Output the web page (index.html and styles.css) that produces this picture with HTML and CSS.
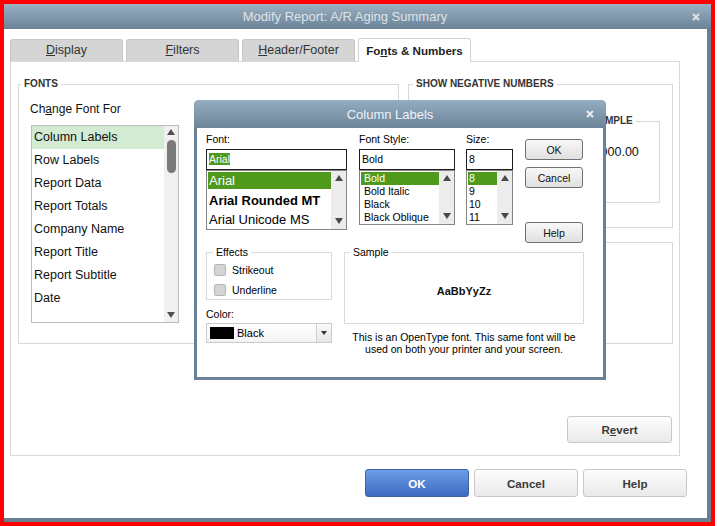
FILE: index.html
```html
<!DOCTYPE html>
<html lang="en">
<head>
	<meta charset="UTF-8">
	<title>Modify Report: A/R Aging Summary</title>
	<link rel="stylesheet" href="styles.css">
</head>
<body>
<div class="screen">
	<div class="frame">
		<div class="titlebar">
			<span class="title">Modify Report: A/R Aging Summary</span>
			<span class="close"><svg width="8" height="8" viewBox="0 0 8 8"><path d="M1 1L7 7M7 1L1 7" stroke="#dde3e8" stroke-width="2.2"/></svg></span>
		</div>
		<div class="win-body">
			<div class="tabs">
				<div class="tab"><u>D</u>isplay</div>
				<div class="tab"><u>F</u>ilters</div>
				<div class="tab"><u>H</u>eader/Footer</div>
				<div class="tab active">Fo<u>n</u>ts &amp; Numbers</div>
			</div>
			<div class="panel">
				<div class="panel-row">
					<fieldset class="group fonts-box">
						<legend>FONTS</legend>
						<div class="fonts-in">
							<div class="change-label">Ch<u>a</u>nge Font For</div>
							<div class="listbox">
								<ul class="items">
									<li class="sel">Column Labels</li>
									<li>Row Labels</li>
									<li>Report Data</li>
									<li>Report Totals</li>
									<li>Company Name</li>
									<li>Report Title</li>
									<li>Report Subtitle</li>
									<li>Date</li>
								</ul>
								<div class="vscroll">
									<span class="arr up"></span>
									<span class="thumb"></span>
									<span class="arr down"></span>
								</div>
							</div>
						</div>
					</fieldset>
					<div class="right-col">
						<fieldset class="group neg-box">
							<legend>SHOW NEGATIVE NUMBERS</legend>
							<div class="neg-in">
								<fieldset class="group sample-box">
									<legend>SAMPLE</legend>
									<div class="sample-num">-1,000.00</div>
								</fieldset>
							</div>
						</fieldset>
						<fieldset class="group all-box">
							<legend>SHOW ALL NUMBERS</legend>
						</fieldset>
					</div>
				</div>
				<div class="revert-row"><button class="btn">R<u>e</u>vert</button></div>
			</div>
			<div class="footer">
				<button class="btn primary">OK</button>
				<button class="btn">Cancel</button>
				<button class="btn">Help</button>
			</div>
		</div>
	</div>

	<!-- font picker dialog on top of the tab -->
	<div class="fdlg">
		<div class="fdlg-title">
			<span class="t">Column Labels</span>
			<span class="x"><svg width="8" height="8" viewBox="0 0 8 8"><path d="M1 1L7 7M7 1L1 7" stroke="#e2e8ec" stroke-width="2.2"/></svg></span>
		</div>
		<div class="fdlg-body">
			<div class="fd-row1">
				<div class="fd-col c-font">
					<div class="fd-label">Font:</div>
					<div class="fd-input"><span class="hl">Arial</span></div>
					<div class="fd-list">
						<ul class="font-items">
							<li class="sel">Arial</li>
							<li class="b">Arial Rounded MT</li>
							<li>Arial Unicode MS</li>
						</ul>
						<div class="fd-scroll"><span class="arr up"></span><span class="arr down"></span></div>
					</div>
				</div>
				<div class="fd-col c-style">
					<div class="fd-label">Font Style:</div>
					<div class="fd-input">Bold</div>
					<div class="fd-list short">
						<ul class="small-items">
							<li class="sel">Bold</li>
							<li>Bold Italic</li>
							<li>Black</li>
							<li>Black Oblique</li>
						</ul>
						<div class="fd-scroll"><span class="arr up"></span><span class="arr down"></span></div>
					</div>
				</div>
				<div class="fd-col c-size">
					<div class="fd-label">Size:</div>
					<div class="fd-input">8</div>
					<div class="fd-list short">
						<ul class="small-items">
							<li class="sel">8</li>
							<li>9</li>
							<li>10</li>
							<li>11</li>
						</ul>
						<div class="fd-scroll"><span class="arr up"></span><span class="arr down"></span></div>
					</div>
				</div>
				<div class="fd-btns">
					<button class="fd-btn">OK</button>
					<button class="fd-btn cancel">Cancel</button>
					<button class="fd-btn help">Help</button>
				</div>
			</div>
			<div class="fd-row2">
				<div class="fd-left">
					<fieldset class="fd-group effects">
						<legend>Effects</legend>
						<div class="chk-row first"><span class="chk"></span><span>Strikeout</span></div>
						<div class="chk-row"><span class="chk"></span><span>Underline</span></div>
					</fieldset>
					<div class="color-label">Color:</div>
					<div class="color-sel">
						<span class="swatch"></span>
						<span>Black</span>
						<span class="drop"><span class="tri"></span></span>
					</div>
				</div>
				<div class="fd-right">
					<fieldset class="fd-group sample">
						<legend>Sample</legend>
						<div class="sample-text">AaBbYyZz</div>
					</fieldset>
					<div class="desc">This is an OpenType font. This same font will be<br>used on both your printer and your screen.</div>
				</div>
			</div>
		</div>
	</div>
</div>
</body>
</html>
```

FILE: styles.css
```css
*{
	box-sizing: border-box;
}
body{
	margin: 0;
	background: #fff;
	font-family: "Liberation Sans", Arial, sans-serif;
	color: #222;
}
.screen{
	position: relative;
	width: 717px;
	height: 526px;
}
.frame{
	width: 715px;
	height: 526px;
	border: 4px solid #ff0000;
	display: flex;
	flex-direction: column;
}
.titlebar{
	height: 25px;
	flex: none;
	display: flex;
	align-items: center;
	background: linear-gradient(#9ab0c3, #6b8397);
}
.titlebar .title{
	flex: 1;
	text-align: center;
	font-size: 13px;
	color: #dfe3e7;
}
.titlebar .close{
	width: 25px;
	display: flex;
	padding-left: 6px;
}
.win-body{
	flex: 1;
	background: #fff;
	border-right: 4px solid #6a7f92;
	border-bottom: 4px solid #6a7f92;
	padding-top: 8px;
}

/* tabs */
.tabs{
	display: flex;
	align-items: flex-end;
	gap: 3px;
	height: 24px;
	margin-left: 6px;
}
.tab{
	width: 113px;
	height: 22px;
	line-height: 21px;
	text-align: center;
	font-size: 12.5px;
	color: #333;
	background: #d5d5d5;
	border: 1px solid #c6c6c6;
	border-bottom: none;
	border-radius: 3px 3px 0 0;
}
.tab.active{
	position: relative;
	height: 24px;
	margin-bottom: -1px;
	line-height: 23px;
	background: #fff;
	border-color: #d3d3d3;
	font-weight: bold;
	font-size: 11.6px;
	color: #222;
}

/* panel */
.panel{
	width: 670px;
	height: 395px;
	margin-left: 6px;
	border: 1px solid #d9d9d9;
	padding: 16px 0 12px 7px;
	display: flex;
	flex-direction: column;
}
.panel-row{
	display: flex;
}
.group{
	margin: 0;
	padding: 0;
	min-width: 0;
	border: 1px solid #d8d8d8;
}
.group > legend{
	font-size: 10px;
	font-weight: bold;
	line-height: 12px;
	color: #333;
	padding: 0 3px;
	margin-left: 2px;
	white-space: nowrap;
}
.fonts-box{
	width: 381px;
	height: 266px;
}
.fonts-in{
	padding: 11px 0 0 11px;
}
.change-label{
	font-size: 12px;
	line-height: 16px;
	color: #111;
}
.listbox{
	display: flex;
	width: 148px;
	height: 198px;
	margin: 8px 0 0 1px;
	border: 1px solid #bdbdbd;
}
.items{
	flex: 1;
	margin: 0;
	padding: 0;
	list-style: none;
}
.items li{
	height: 23px;
	line-height: 23px;
	padding-left: 2px;
	font-size: 12.5px;
	color: #111;
}
.items li.sel{
	background: #d2ebd2;
}
.vscroll{
	width: 14px;
	background: #f0f0f0;
	display: flex;
	flex-direction: column;
	align-items: center;
	padding: 3px 0 4px;
}
.vscroll .thumb{
	width: 9px;
	height: 33px;
	margin-top: 5px;
	border-radius: 5px;
	background: #7a7a7a;
}
.vscroll .down{
	margin-top: auto;
}
.arr{
	display: block;
	width: 0;
	height: 0;
	border-left: 4.5px solid transparent;
	border-right: 4.5px solid transparent;
}
.arr.up{
	border-bottom: 6px solid #505050;
}
.arr.down{
	border-top: 6px solid #505050;
}
.right-col{
	width: 265px;
	margin-left: 9px;
}
.neg-box{
	height: 150px;
}
.neg-box > legend{
	margin-left: 4px;
}
.neg-in{
	padding: 25px 0 0 176px;
}
.sample-box{
	width: 75px;
	height: 88px;
}
.sample-num{
	padding: 18px 22px 0 0;
	text-align: right;
	font-size: 12.5px;
	line-height: 14px;
	color: #111;
	white-space: nowrap;
}
.all-box{
	height: 108px;
	margin-top: 8px;
}
.revert-row{
	margin-top: auto;
	display: flex;
	justify-content: flex-end;
	padding-right: 7px;
}
.btn{
	font-family: inherit;
	font-size: 11.6px;
	font-weight: bold;
	color: #3a3a3a;
	width: 104px;
	height: 28px;
	border: 1px solid #c8c8c8;
	border-radius: 3px;
	background: linear-gradient(#fdfdfd, #e9e9e9);
	padding: 0;
}
.revert-row .btn{
	width: 105px;
	height: 27px;
}
.btn.primary{
	color: #fff;
	border-color: #3b62a8;
	background: linear-gradient(#6d9de3, #3d6bc4);
}
.footer{
	display: flex;
	justify-content: flex-end;
	gap: 5px;
	margin-top: 13px;
	padding-right: 20px;
}

/* font dialog */
.fdlg{
	position: absolute;
	left: 194px;
	top: 100px;
	width: 412px;
	height: 280px;
	background: #fff;
	border: 3px solid #6b8195;
	border-top: none;
	border-radius: 5px 5px 0 0;
	font-size: 10.5px;
	color: #000;
}
.fdlg-title{
	display: flex;
	align-items: center;
	height: 28px;
	margin: 0 -3px;
	border-radius: 5px 5px 0 0;
	background: linear-gradient(#95adc1, #6c8499);
}
.fdlg-title .t{
	flex: 1;
	text-align: center;
	font-size: 13px;
	color: #eef2f5;
}
.fdlg-title .x{
	width: 20px;
	display: flex;
}
.fdlg-body{
	padding-left: 9px;
}
.fd-row1{
	display: flex;
	height: 115px;
}
.fd-col{
	display: flex;
	flex-direction: column;
}
.c-font{
	width: 141px;
	margin-right: 12px;
}
.c-style{
	width: 96px;
	margin-right: 11px;
}
.c-size{
	width: 47px;
	margin-right: 12px;
}
.fd-label{
	padding-top: 5px;
	line-height: 12px;
	margin-bottom: 4px;
}
.fd-input{
	height: 21px;
	border: 1px solid #1e1e1e;
	padding-left: 2px;
	line-height: 19px;
}
.fd-input .hl{
	background: #4f9a1d;
	color: #fff;
}
.fd-list{
	display: flex;
	height: 60px;
	border: 1px solid #858585;
}
.fd-list.short{
	height: 55px;
}
.fd-list ul{
	flex: 1;
	margin: 0;
	padding: 1px 0 0 1px;
	list-style: none;
	overflow: hidden;
}
.font-items li{
	font-size: 13px;
	line-height: 17px;
	margin-bottom: 2.5px;
	padding-left: 1px;
	white-space: nowrap;
}
.font-items li.b{
	font-weight: bold;
}
.small-items li{
	line-height: 13px;
	padding-left: 3px;
}
.c-size .small-items li{
	padding-left: 1px;
}
.fd-list li.sel{
	background: #4f9a1d;
	color: #fff;
}
.fd-scroll{
	width: 15px;
	flex: none;
	background: #ececec;
	display: flex;
	flex-direction: column;
	align-items: center;
	justify-content: space-between;
	padding: 4px 0 5px;
}
.fd-scroll .arr.up{
	border-bottom-color: #4a4a4a;
}
.fd-scroll .arr.down{
	border-top-color: #4a4a4a;
}
.fd-btns{
	display: flex;
	flex-direction: column;
	width: 58px;
	padding-top: 11px;
}
.fd-btn{
	height: 21px;
	padding: 0;
	font-family: inherit;
	font-size: 10.5px;
	color: #111;
	border: 1px solid #707070;
	border-radius: 3px;
	background: linear-gradient(#f8f8f8, #e0e0e0);
}
.fd-btn.cancel{
	margin-top: 7px;
}
.fd-btn.help{
	margin-top: 34px;
}
.fd-row2{
	display: flex;
	margin-top: 3px;
}
.fd-left{
	width: 126px;
	margin-right: 12px;
}
.fd-right{
	width: 240px;
}
.fd-group{
	margin: 0;
	padding: 0;
	min-width: 0;
	border: 1px solid #dadada;
}
.fd-group > legend{
	line-height: 12px;
	padding: 0 3px;
}
.effects{
	height: 54px;
}
.effects > legend{
	margin-left: 6px;
}
.chk-row{
	display: flex;
	align-items: center;
	height: 12px;
	margin: 8px 0 0 7px;
}
.chk-row.first{
	margin-top: 6px;
}
.chk{
	width: 12px;
	height: 12px;
	margin-right: 6px;
	border: 1px solid #b6b6b6;
	border-radius: 2px;
	background: #d5d5d5;
}
.color-label{
	margin-top: 8px;
	line-height: 12px;
}
.color-sel{
	display: flex;
	align-items: center;
	height: 20px;
	margin-top: 3px;
	border: 1px solid #cacaca;
	background: linear-gradient(#fff, #f3f3f3);
	font-size: 11px;
}
.swatch{
	width: 24px;
	height: 12px;
	margin: 0 3px 0 3px;
	background: #000;
}
.drop{
	margin-left: auto;
	width: 15px;
	height: 18px;
	border-left: 1px solid #d0d0d0;
	display: flex;
	align-items: center;
	justify-content: center;
	background: linear-gradient(#fafafa, #e6e6e6);
}
.tri{
	border-left: 3.5px solid transparent;
	border-right: 3.5px solid transparent;
	border-top: 4px solid #333;
}
.sample{
	height: 78px;
}
.sample > legend{
	margin-left: 5px;
}
.sample-text{
	padding-top: 27px;
	text-align: center;
	font-weight: bold;
	font-size: 11px;
	line-height: 12px;
	color: #111;
}
.desc{
	margin-top: 7px;
	line-height: 12px;
	text-align: center;
}
```
